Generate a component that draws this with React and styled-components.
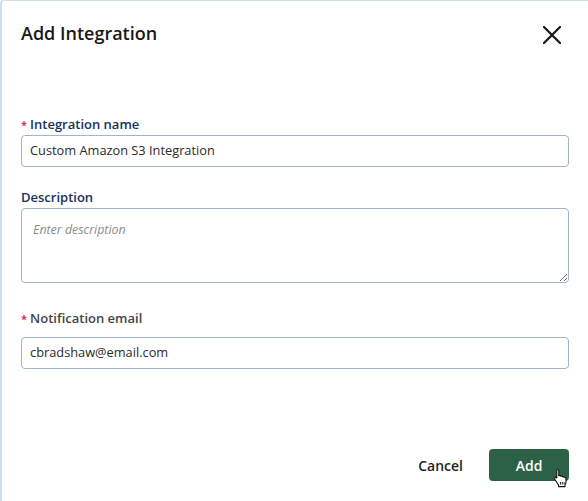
import React from "react";
import styled, { createGlobalStyle } from "styled-components";

const GlobalStyle = createGlobalStyle`
  html, body {
    margin: 0;
    padding: 0;
    background: #fff;
  }
  body {
    font-family: "Open Sans", "Noto Sans", sans-serif;
  }
`;

const Modal = styled.div`
  position: relative;
  box-sizing: border-box;
  width: 588px;
  height: 501px;
  padding: 22px 19px 20px 19px;
  background: #fff;
  border-top: 1px solid #c9dff2;
  border-left: 2px solid #c9dff2;
  border-radius: 4px 0 0 0;
  display: flex;
  flex-direction: column;
`;

const Header = styled.div`
  display: flex;
  justify-content: space-between;
  align-items: flex-start;
  height: 93px;
`;

const Title = styled.h1`
  margin: 0;
  font-size: 18px;
  line-height: 21px;
  font-weight: 600;
  color: #181818;
`;

const CloseButton = styled.button`
  border: 0;
  padding: 0;
  margin: 3px 8px 0 0;
  width: 18px;
  height: 18px;
  background: none;
  color: #181818;
  display: flex;
`;

const Form = styled.form`
  flex: 1;
  display: flex;
  flex-direction: column;
`;

const Field = styled.div`
  display: flex;
  flex-direction: column;
  margin-bottom: ${(p) => p.$mb || 0}px;
`;

const Label = styled.label`
  height: 18px;
  font-size: 13px;
  line-height: 16px;
  font-weight: 600;
  color: ${(p) => (p.$muted ? "#444" : "#16325c")};
  margin-bottom: ${(p) => p.$gap || 1}px;
`;

const Star = styled.span`
  color: #d8134f;
  font-size: 11px;
  line-height: 1;
  margin-right: 3px;
`;

const Input = styled.input`
  box-sizing: border-box;
  width: 548px;
  height: 32px;
  padding: 0 8px 2px;
  border: 1px solid #9fb4cf;
  border-radius: 4px;
  font-family: inherit;
  font-size: 12.8px;
  color: #2b2b2b;
  background: #fff;
  outline: none;
`;

const TextArea = styled.textarea`
  box-sizing: border-box;
  display: block;
  width: 548px;
  height: 75px;
  padding: 12px 11px;
  border: 1px solid #9fb4cf;
  border-radius: 4px;
  font-family: inherit;
  font-size: 12.4px;
  line-height: 18px;
  color: #2b2b2b;
  background: #fff;
  outline: none;
  resize: vertical;

  &::placeholder {
    color: #8c8c8c;
    font-style: italic;
    opacity: 1;
  }
`;

const Footer = styled.div`
  margin-top: auto;
  display: flex;
  justify-content: flex-end;
  align-items: center;
  gap: 26px;
`;

const CancelButton = styled.button`
  border: 0;
  padding: 0;
  background: none;
  font-family: inherit;
  font-size: 14px;
  font-weight: 600;
  color: #1f1f1f;
`;

const AddButton = styled.button`
  width: 80px;
  height: 32px;
  border: 0;
  border-radius: 4px;
  background: #2c6145;
  color: #fff;
  font-family: inherit;
  font-size: 14px;
  font-weight: 600;
`;

const Cursor = styled.svg`
  position: absolute;
  left: 551px;
  top: 467px;
`;

export default function App() {
  return (
    <>
      <GlobalStyle />
      <Modal>
        <Header>
          <Title>Add Integration</Title>
          <CloseButton type="button" aria-label="Close">
            <svg width="18" height="18" viewBox="0 0 18 18" fill="none">
              <path
                d="M1 1L17 17M17 1L1 17"
                stroke="currentColor"
                strokeWidth="2.3"
                strokeLinecap="round"
              />
            </svg>
          </CloseButton>
        </Header>
        <Form onSubmit={(e) => e.preventDefault()}>
          <Field $mb={22}>
            <Label>
              <Star>*</Star>Integration name
            </Label>
            <Input defaultValue="Custom Amazon S3 Integration" />
          </Field>
          <Field $mb={27}>
            <Label>Description</Label>
            <TextArea placeholder="Enter description" />
          </Field>
          <Field>
            <Label $muted $gap={9}>
              <Star>*</Star>Notification email
            </Label>
            <Input defaultValue="cbradshaw@email.com" />
          </Field>
          <Footer>
            <CancelButton type="button">Cancel</CancelButton>
            <AddButton type="button">Add</AddButton>
          </Footer>
        </Form>
        <Cursor width="16" height="20" viewBox="0 0 16 20">
          <path
            d="M4.5 1.5c.8 0 1.3.6 1.3 1.3v5l.8-.2c.6-.1 1.1.2 1.3.6.6-.3 1.3-.1 1.6.5.6-.3 1.4 0 1.7.6.7-.3 1.6.2 1.7 1.1l.1 3.6c0 1.2-.5 2.2-1 3v1.6H5.6v-1.4L1.9 11.5c-.5-.7-.4-1.5.2-1.9.6-.4 1.3-.3 1.7.2V2.8c0-.7 0-1.3.7-1.3z"
            fill="#fff"
            stroke="#111"
            strokeWidth="1.1"
            strokeLinejoin="round"
          />
          <path d="M7.5 14v2.5M9.3 14v2.5M11.1 14v2.5" stroke="#111" strokeWidth="0.9" />
        </Cursor>
      </Modal>
    </>
  );
}
